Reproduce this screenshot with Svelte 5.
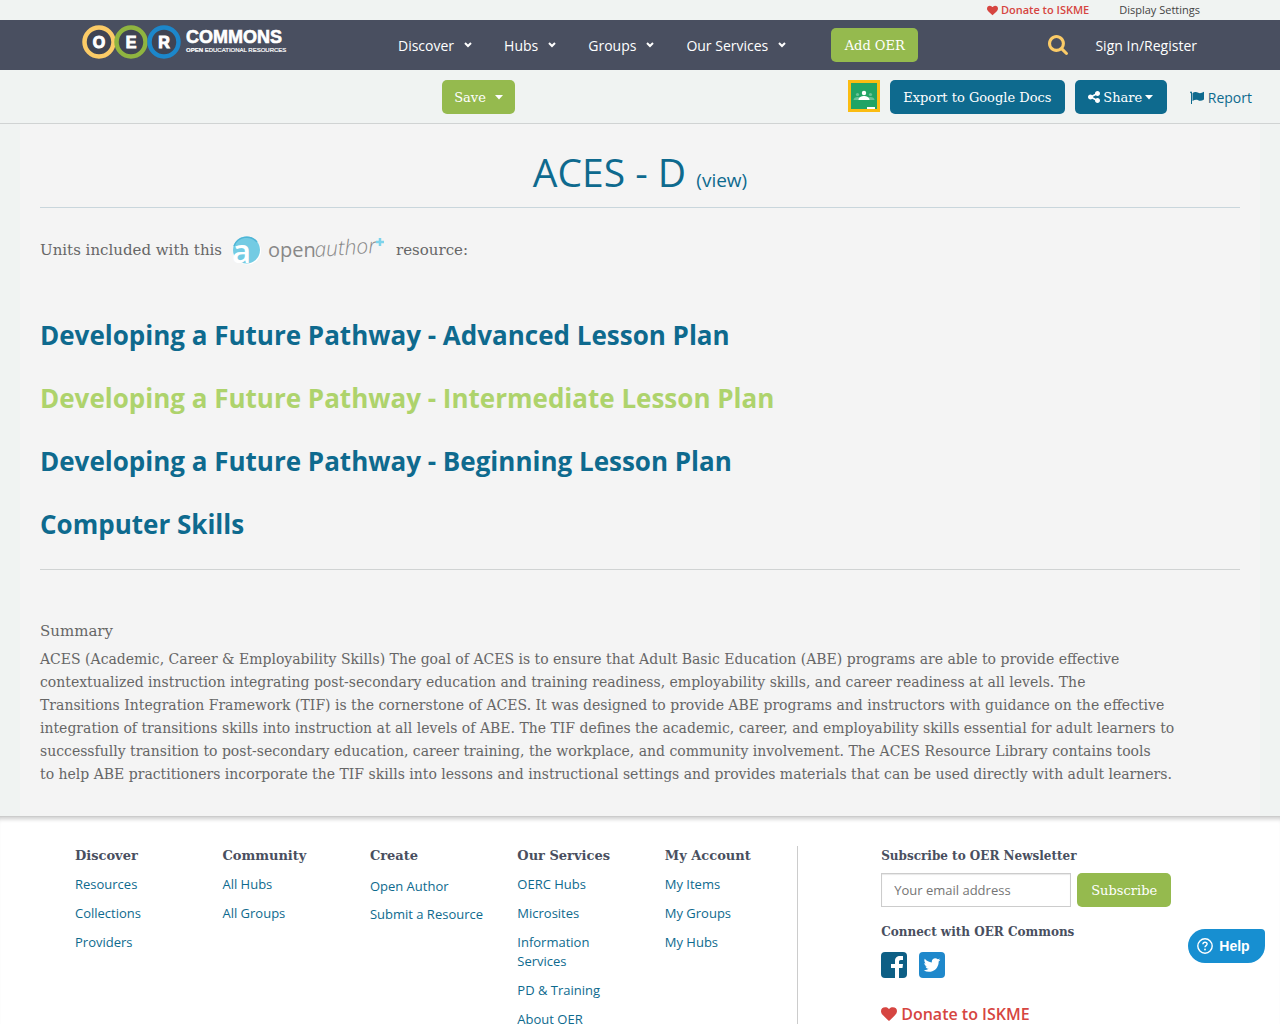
<script lang="ts">
	type FooterColumn = {
		title: string;
		links: string[];
		spaced?: boolean;
	};

	const navItems = ['Discover', 'Hubs', 'Groups', 'Our Services'];

	const units = [
		{ title: 'Developing a Future Pathway - Advanced Lesson Plan', active: false },
		{ title: 'Developing a Future Pathway - Intermediate Lesson Plan', active: true },
		{ title: 'Developing a Future Pathway - Beginning Lesson Plan', active: false },
		{ title: 'Computer Skills', active: false },
	];

	const footerColumns: FooterColumn[] = [
		{ title: 'Discover', links: ['Resources', 'Collections', 'Providers'] },
		{ title: 'Community', links: ['All Hubs', 'All Groups'] },
		{ title: 'Create', links: ['Open Author', 'Submit a Resource'], spaced: true },
		{ title: 'Our Services', links: ['OERC Hubs', 'Microsites', 'Information Services', 'PD & Training', 'About OER'] },
		{ title: 'My Account', links: ['My Items', 'My Groups', 'My Hubs'] },
	];

	let email = $state('');
</script>

{#snippet heart(size: number)}
	<svg class="icon" width={size} height={size} viewBox="0 128 1792 1536" aria-hidden="true">
		<path d="M896 1664q-26 0-44-18l-624-602q-10-8-27.5-26t-55.5-65.5-68-97.5-53.5-121-23.5-138q0-220 127-344t351-124q62 0 126.5 21.5t120 58 95.5 68.5 76 68q36-36 76-68t95.5-68.5 120-58 126.5-21.5q224 0 351 124t127 344q0 221-229 450l-623 600q-18 18-44 18z" />
	</svg>
{/snippet}

{#snippet caret()}
	<svg class="icon" width="8" height="5" viewBox="0 0 8 5" aria-hidden="true"><path d="M0 0h8L4 4.5z" /></svg>
{/snippet}

<div class="top-links">
	<a class="donate" href="#donate">{@render heart(11)} Donate to ISKME</a>
	<a href="#settings">Display Settings</a>
</div>

<header class="navbar">
	<a class="logo" href="#home" aria-label="OER Commons">
		<svg width="204" height="36" viewBox="0 0 204 36">
			<g fill="#3f4453" stroke-width="4.5">
				<circle cx="17" cy="18" r="14.5" stroke="#fbcb67" />
				<circle cx="49" cy="18" r="14.5" stroke="#8fb440" />
				<circle cx="82" cy="18" r="14.5" stroke="#1c87cb" />
			</g>
			<g class="logo-letters">
				<text x="17" y="24">O</text>
				<text x="49" y="24">E</text>
				<text x="82" y="24">R</text>
			</g>
			<text class="logo-name" x="104" y="19">COMMONS</text>
			<text class="logo-tag" x="104" y="28"><tspan font-weight="700">OPEN</tspan> EDUCATIONAL RESOURCES</text>
		</svg>
	</a>

	<nav class="menu">
		{#each navItems as item (item)}
			<a href="#menu">
				{item}
				<svg width="8" height="6" viewBox="0 0 8 6" aria-hidden="true">
					<path d="M1 1l3 3 3-3" fill="none" stroke="#fff" stroke-width="2" />
				</svg>
			</a>
		{/each}
	</nav>

	<button class="btn green add">Add OER</button>

	<button class="search" aria-label="Search">
		<svg width="20" height="20" viewBox="64 128 1664 1664" aria-hidden="true">
			<path fill="#fbcb67" d="M1216 832q0-185-131.5-316.5t-316.5-131.5-316.5 131.5-131.5 316.5 131.5 316.5 316.5 131.5 316.5-131.5 131.5-316.5zm512 832q0 52-38 90t-90 38q-54 0-90-38l-343-342q-179 124-399 124-143 0-273.5-55.5t-225-150-150-225-55.5-273.5 55.5-273.5 150-225 225-150 273.5-55.5 273.5 55.5 225 150 150 225 55.5 273.5q0 220-124 399l343 343q37 37 37 90z" />
		</svg>
	</button>
	<a class="sign-in" href="#login">Sign In/Register</a>
</header>

<div class="toolbar">
	<button class="btn green save">Save {@render caret()}</button>
	<div class="tools">
		<a class="classroom" href="#classroom" aria-label="Google Classroom">
			<svg width="32" height="32" viewBox="0 0 32 32">
				<path fill="#fbbc12" d="M0 0h32v32H0z" />
				<path fill="#21a465" d="M3 3h26v26H3z" />
				<g fill="#69c296">
					<circle cx="9.5" cy="14.5" r="1.6" />
					<circle cx="22.5" cy="14.5" r="1.6" />
					<path d="M5.5 20c0-2 2-3 4-3s4 1 4 3zM18.5 20c0-2 2-3 4-3s4 1 4 3z" />
				</g>
				<circle cx="16" cy="13" r="2.2" fill="#fff" />
				<path fill="#fff" d="M10.5 20c0-3 3-4 5.5-4s5.5 1 5.5 4zM19 27h8v2h-8z" />
			</svg>
		</a>
		<button class="btn blue export">Export to Google Docs</button>
		<button class="btn blue share">
			<svg class="icon" width="12" height="12" viewBox="128 128 1536 1536" aria-hidden="true">
				<path d="M1344 1024q133 0 226.5 93.5t93.5 226.5-93.5 226.5-226.5 93.5-226.5-93.5-93.5-226.5q0-12 2-34l-360-180q-92 86-218 86-133 0-226.5-93.5t-93.5-226.5 93.5-226.5 226.5-93.5q126 0 218 86l360-180q-2-22-2-34 0-133 93.5-226.5t226.5-93.5 226.5 93.5 93.5 226.5-93.5 226.5-226.5 93.5q-126 0-218-86l-360 180q2 22 2 34t-2 34l360 180q92-86 218-86z" />
			</svg>
			Share
			{@render caret()}
		</button>
		<a class="report" href="#report">
			<svg class="icon" width="15" height="13" viewBox="0 0 15 13" aria-hidden="true">
				<path d="M0 1.5a1 1 0 0 1 2 0V13H1V2.5zM2.5 2.2C5 .6 6.5 1 8.3 1.8c1.8.8 3.7 0 5.7-1v7.7c-2.3 1.4-4 1.6-5.8.7-1.9-.9-3.5-.5-5.7.8z" />
			</svg>
			Report
		</a>
	</div>
</div>

<main>
	<h1><a href="#resource">ACES - D <small>(view)</small></a></h1>

	<div class="included">
		<span>Units included with this</span>
		<svg class="open-author" width="154" height="32" viewBox="0 0 154 32" role="img" aria-label="openauthor+">
			<circle cx="15.5" cy="17" r="13.5" fill="#fff" />
			<circle cx="14.5" cy="16" r="13.5" fill="#73cbe3" />
			<path d="M2 12A13.5 13.5 0 0 1 25 8" fill="none" stroke="#4eb5d6" stroke-width="1.5" />
			<text class="mark" x="0" y="29">a</text>
			<text class="open" x="36" y="23">open</text>
			<text class="author" x="83" y="23" transform="rotate(-4 83 23)">author</text>
			<path d="M148 4v8M144 8h8" stroke="#7dd3eb" stroke-width="2.5" />
		</svg>
		<span>resource:</span>
	</div>

	<ul class="units">
		{#each units as unit (unit.title)}
			<li><h2><a href="#unit" class:active={unit.active}>{unit.title}</a></h2></li>
		{/each}
	</ul>

	<section class="summary">
		<h3>Summary</h3>
		<p>
			ACES (Academic, Career &amp; Employability Skills) The goal of ACES is to ensure that Adult Basic Education (ABE) programs are able to provide effective<br />
			contextualized instruction integrating post-secondary education and training readiness, employability skills, and career readiness at all levels. The<br />
			Transitions Integration Framework (TIF) is the cornerstone of ACES. It was designed to provide ABE programs and instructors with guidance on the effective<br />
			integration of transitions skills into instruction at all levels of ABE. The TIF defines the academic, career, and employability skills essential for adult learners to<br />
			successfully transition to post-secondary education, career training, the workplace, and community involvement. The ACES Resource Library contains tools<br />
			to help ABE practitioners incorporate the TIF skills into lessons and instructional settings and provides materials that can be used directly with adult learners.
		</p>
	</section>
</main>

<footer>
	<div class="footer-wrap">
		<div class="footer-links">
			{#each footerColumns as column (column.title)}
				<div>
					<h4>{column.title}</h4>
					<ul class:spaced={column.spaced}>
						{#each column.links as link (link)}
							<li><a href="#footer">{link}</a></li>
						{/each}
					</ul>
				</div>
			{/each}
		</div>

		<div class="connect">
			<form onsubmit={(e) => e.preventDefault()}>
				<label for="email">Subscribe to OER Newsletter</label>
				<div class="subscribe">
					<input id="email" type="email" placeholder="Your email address" bind:value={email} />
					<button class="btn green">Subscribe</button>
				</div>
			</form>
			<h5>Connect with OER Commons</h5>
			<div class="social">
				<a href="#facebook" aria-label="Facebook">
					<svg width="26" height="26" viewBox="0 0 26 26">
						<rect width="26" height="26" rx="4" fill="#0d5f85" />
						<path fill="#fff" d="M14 26V16h-4v-4h4V9c0-3.5 2-5 5-5h3v4h-2.2C18.4 8 18 8.7 18 10v2h4l-.5 4H18v10z" />
					</svg>
				</a>
				<a href="#twitter" aria-label="Twitter">
					<svg width="26" height="26" viewBox="0 0 26 26">
						<rect width="26" height="26" rx="4" fill="#1f88cb" />
						<path transform="translate(3.5 3.5) scale(.0106)" fill="#fff" d="M1684 408q-67 98-162 167 1 14 1 42 0 130-38 259.5t-115.5 248.5-184.5 210.5-258 146-323 54.5q-271 0-496-145 35 4 78 4 225 0 401-138-105-2-188-64.5t-114-159.5q33 5 61 5 43 0 85-11-112-23-185.5-111.5t-73.5-205.5v-4q68 38 146 41-66-44-105-115t-39-154q0-88 44-163 121 149 294.5 238.5t371.5 99.5q-8-38-8-74 0-134 94.5-228.5t228.5-94.5q140 0 236 102 109-21 205-78-37 115-142 178 93-10 186-50z" />
					</svg>
				</a>
			</div>
			<a class="donate big" href="#donate">{@render heart(16)} Donate to ISKME</a>
		</div>
	</div>
</footer>

<button class="help">
	<svg width="16" height="16" viewBox="0 0 16 16" aria-hidden="true">
		<circle cx="8" cy="8" r="7.2" fill="none" stroke="#fff" stroke-width="1.4" />
		<path d="M5.9 6.3C6 4.9 6.9 4.3 8 4.3s2.1.7 2.1 1.8c0 1.5-2.1 1.5-2.1 3.2" fill="none" stroke="#fff" stroke-width="1.4" />
		<circle cx="8" cy="11.5" r=".9" fill="#fff" />
	</svg>
	Help
</button>

<style>
	:global(body) {
		margin: 0;
		background: #f0f3f2;
		color: #666;
		font-family: 'Open Sans', sans-serif;
		font-size: 14px;
	}

	a {
		color: #0e6a8e;
		text-decoration: none;
	}

	h1, h2, h3, h4, h5, p, ul {
		margin: 0;
		padding: 0;
	}

	ul {
		list-style: none;
	}

	svg {
		flex: none;
		overflow: visible;
	}

	.icon {
		fill: currentColor;
	}

	/* Buttons */
	.btn {
		box-sizing: border-box;
		display: flex;
		align-items: center;
		justify-content: center;
		height: 34px;
		padding: 0;
		border: 0;
		border-radius: 5px;
		color: #fff;
		font-family: 'DejaVu Serif', serif;
		font-size: 13px;
		white-space: nowrap;
	}

	.green { background: #95ba4e; }
	.blue { background: #0e6a8e; }

	/* Header */
	.top-links {
		display: flex;
		justify-content: flex-end;
		gap: 30px;
		padding-right: 80px;
		font-size: 11px;
		line-height: 20px;
	}

	.top-links a {
		color: #444;
	}

	.donate,
	.top-links .donate {
		display: flex;
		align-items: center;
		gap: 3px;
		color: #d64541;
		font-weight: 600;
	}

	.navbar {
		display: flex;
		align-items: center;
		height: 50px;
		padding: 0 83px 0 82px;
		background: #494f60;
	}

	.logo {
		height: 36px;
		margin-bottom: 6px;
	}

	.logo text {
		fill: #fff;
		font-family: 'Liberation Sans', sans-serif;
	}

	.logo-letters text {
		font-size: 16px;
		font-weight: 700;
		text-anchor: middle;
		stroke: #fff;
	}

	.logo .logo-name {
		font-size: 18px;
		font-weight: 700;
		stroke: #fff;
		stroke-width: 0.6px;
	}

	.logo .logo-tag {
		font-size: 6px;
		stroke: #fff;
		stroke-width: 0.2px;
	}

	.menu {
		display: flex;
		gap: 32px;
		margin-left: 112px;
	}

	.menu a {
		display: flex;
		align-items: center;
		gap: 10px;
		color: #fff;
	}

	.add {
		width: 87px;
		margin-left: 45px;
	}

	.search {
		height: 20px;
		margin-left: auto;
		padding: 0;
		border: 0;
		background: none;
	}

	.search svg {
		display: block;
	}

	.sign-in {
		margin-left: 27px;
		color: #fff;
	}

	/* Toolbar */
	.toolbar {
		display: flex;
		align-items: flex-start;
		justify-content: space-between;
		padding: 10px 28px 9px 442px;
		border-bottom: 1px solid #d0d3d3;
	}

	.save {
		gap: 9px;
		width: 73px;
	}

	.tools {
		display: flex;
		gap: 10px;
	}

	.classroom {
		display: flex;
		height: 32px;
	}

	.export {
		width: 175px;
	}

	.share {
		gap: 3px;
		width: 92px;
	}

	.report {
		display: flex;
		align-items: center;
		gap: 3px;
		height: 34px;
		margin-left: 13px;
	}

	/* Resource */
	main {
		margin: 0 20px;
		padding: 24px 20px 30px;
		background: #f4f4f4;
	}

	h1 {
		padding-bottom: 11px;
		border-bottom: 1px solid #c9d6dc;
		font-size: 39px;
		font-weight: 400;
		line-height: 48px;
		text-align: center;
	}

	h1 small {
		font-size: 19px;
		line-height: 20px;
	}

	.included {
		display: flex;
		align-items: center;
		gap: 10px;
		height: 84px;
		font-family: 'DejaVu Serif', serif;
		font-size: 15px;
	}

	.open-author text {
		font-family: 'Open Sans', sans-serif;
		font-size: 20px;
		fill: #888;
	}

	.open-author .mark {
		font-size: 33px;
		font-weight: 600;
		fill: #fff;
	}

	.open-author .author {
		font-size: 21px;
		font-style: italic;
		font-weight: 300;
	}

	.units {
		padding: 12px 0 13px;
		border-bottom: 1px solid #d0d3d3;
	}

	h2 {
		font-size: 26px;
		font-weight: 700;
		line-height: 63px;
	}

	h2 a.active {
		color: #aed36c;
	}

	.summary {
		padding-top: 50px;
		font-family: 'DejaVu Serif', serif;
		font-size: 14px;
		line-height: 23px;
	}

	h3 {
		margin-bottom: 5px;
		font-size: 15px;
		font-weight: 400;
	}

	/* Footer */
	footer {
		padding-top: 29px;
		border-top: 1px solid #ccc;
		background: #fff;
		box-shadow: inset 0 5px 4px -3px #ccc;
	}

	.footer-wrap {
		display: flex;
		padding: 0 75px;
	}

	.footer-links {
		box-sizing: border-box;
		display: grid;
		grid-template-columns: repeat(5, 1fr);
		gap: 30px;
		width: 64%;
		padding-right: 15px;
		border-right: 1px solid #ccc;
	}

	h4, h5, label {
		color: #494f60;
		font-family: 'DejaVu Serif', serif;
		font-size: 13px;
		font-weight: 700;
		line-height: 20px;
		white-space: nowrap;
	}

	h5, label {
		font-size: 12px;
	}

	.footer-links ul {
		display: flex;
		flex-direction: column;
		gap: 10px;
		margin-top: 9px;
		font-size: 13px;
		line-height: 19px;
	}

	.footer-links ul.spaced {
		gap: 9px;
		margin-top: 11px;
	}

	.footer-links ul.spaced a {
		white-space: nowrap;
	}

	.connect {
		padding-left: 83px;
	}

	.subscribe {
		display: flex;
		gap: 6px;
		margin: 7px 0 15px;
	}

	label {
		display: block;
	}

	input {
		box-sizing: border-box;
		width: 190px;
		height: 34px;
		padding: 0 12px;
		border: 1px solid #ccc;
		box-shadow: inset 0 1px 1px #e8e8e8;
		font-family: 'Open Sans', sans-serif;
		font-size: 13px;
	}

	.subscribe .btn {
		width: 94px;
	}

	.social {
		display: flex;
		gap: 12px;
		height: 26px;
		margin: 10px 0 24px;
	}

	.donate.big {
		gap: 4px;
		font-size: 16px;
		line-height: 24px;
	}

	.help {
		position: fixed;
		right: 15px;
		bottom: 61px;
		display: flex;
		align-items: center;
		justify-content: center;
		gap: 6px;
		width: 77px;
		height: 34px;
		padding: 0 6px 0 0;
		border: 0;
		border-radius: 17px 4px 17px 17px;
		background: #178fd1;
		color: #fff;
		font-family: 'Liberation Sans', sans-serif;
		font-size: 14px;
		font-weight: 700;
	}
</style>
